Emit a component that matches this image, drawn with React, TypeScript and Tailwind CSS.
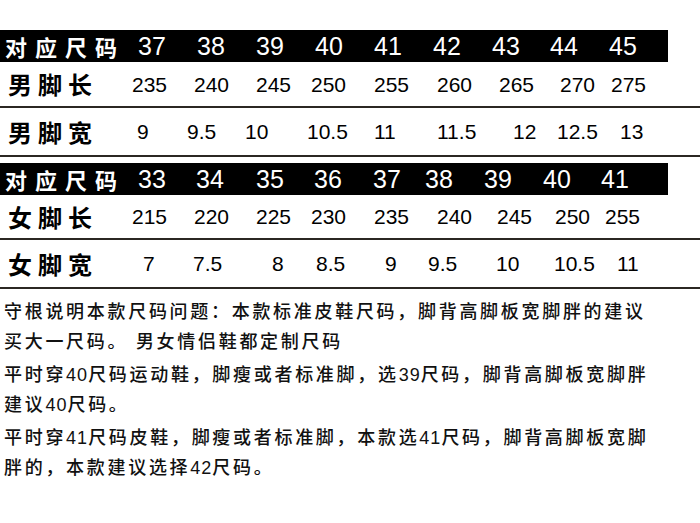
import React from "react";

type Cell = [string, string];

const cjk = "font-['Noto_Sans_CJK_SC',sans-serif]";
const num = "font-['Liberation_Sans',Arial,sans-serif]";
const para = "font-['Liberation_Sans','Noto_Sans_CJK_SC',sans-serif]";

function HeaderBar({ label, cells }: { label: string; cells: Cell[] }) {
  return (
    <div className="flex h-[32px] w-[668px] items-center bg-black text-white">
      <span className={`${cjk} w-[138px] shrink-0 pl-[5px] text-[22px] font-bold leading-none tracking-[8px]`}>
        {label}
      </span>
      {cells.map(([v, w], i) => (
        <span key={i} className={`${num} ${w} shrink-0 text-[25px] leading-none`}>
          {v}
        </span>
      ))}
    </div>
  );
}

function Row({ label, first, cells, h }: { label: string; first: string; cells: Cell[]; h: string }) {
  return (
    <div className={`flex ${h} items-center text-black`}>
      <span className={`${cjk} ${first} shrink-0 pl-[8px] text-[24px] font-bold leading-none tracking-[6px]`}>
        {label}
      </span>
      {cells.map(([v, w], i) => (
        <span key={i} className={`${num} ${w} shrink-0 text-[21px] leading-none`}>
          {v}
        </span>
      ))}
    </div>
  );
}

const Line = () => <div className="h-[2px] w-full bg-[#2b2723]" />;

// digits inside the notes sit tighter than the Chinese characters
const N = ({ children }: { children: string }) => <span className="tracking-[1px]">{children}</span>;

export default function App() {
  return (
    <div className="h-[523px] w-[700px] overflow-hidden bg-white pt-[30px]">
      <HeaderBar
        label="对应尺码"
        cells={[
          ["37", "w-[59px]"], ["38", "w-[59px]"], ["39", "w-[59px]"], ["40", "w-[59px]"],
          ["41", "w-[59px]"], ["42", "w-[59px]"], ["43", "w-[58px]"], ["44", "w-[59px]"], ["45", "w-[40px]"],
        ]}
      />
      <Row
        label="男脚长"
        first="w-[132px]"
        h="h-[44px]"
        cells={[
          ["235", "w-[62px]"], ["240", "w-[62px]"], ["245", "w-[55px]"], ["250", "w-[63px]"],
          ["255", "w-[63px]"], ["260", "w-[62px]"], ["265", "w-[61px]"], ["270", "w-[51px]"], ["275", "w-[45px]"],
        ]}
      />
      <Line />
      <Row
        label="男脚宽"
        first="w-[137px]"
        h="h-[47px]"
        cells={[
          ["9", "w-[50px]"], ["9.5", "w-[58px]"], ["10", "w-[62px]"], ["10.5", "w-[67px]"],
          ["11", "w-[63px]"], ["11.5", "w-[76px]"], ["12", "w-[44px]"], ["12.5", "w-[63px]"], ["13", "w-[40px]"],
        ]}
      />
      <Line />
      <div className="h-[6px]" />
      <HeaderBar
        label="对应尺码"
        cells={[
          ["33", "w-[58px]"], ["34", "w-[60px]"], ["35", "w-[58px]"], ["36", "w-[59px]"],
          ["37", "w-[52px]"], ["38", "w-[59px]"], ["39", "w-[59px]"], ["40", "w-[58px]"], ["41", "w-[40px]"],
        ]}
      />
      <Row
        label="女脚长"
        first="w-[132px]"
        h="h-[43px]"
        cells={[
          ["215", "w-[62px]"], ["220", "w-[62px]"], ["225", "w-[55px]"], ["230", "w-[63px]"],
          ["235", "w-[63px]"], ["240", "w-[60px]"], ["245", "w-[58px]"], ["250", "w-[50px]"], ["255", "w-[45px]"],
        ]}
      />
      <Line />
      <Row
        label="女脚宽"
        first="w-[143px]"
        h="h-[47px]"
        cells={[
          ["7", "w-[50px]"], ["7.5", "w-[79px]"], ["8", "w-[44px]"], ["8.5", "w-[69px]"],
          ["9", "w-[43px]"], ["9.5", "w-[68px]"], ["10", "w-[58px]"], ["10.5", "w-[63px]"], ["11", "w-[40px]"],
        ]}
      />
      <Line />

      <div className={`${para} mt-[8px] whitespace-nowrap pl-[4px] text-[18px] font-medium leading-[30px] tracking-[2.7px] text-[#111]`}>
        <p>
          守根说明本款尺码问题：本款标准皮鞋尺码，脚背高脚板宽脚胖的建议
          <br />
          买大一尺码。 男女情侣鞋都定制尺码
        </p>
        <p className="mt-[3px]">
          平时穿<N>40</N>尺码运动鞋，脚瘦或者标准脚，选<N>39</N>尺码，脚背高脚板宽脚胖
          <br />
          建议<N>40</N>尺码。
        </p>
        <p className="mt-[3px]">
          平时穿<N>41</N>尺码皮鞋，脚瘦或者标准脚，本款选<N>41</N>尺码，脚背高脚板宽脚
          <br />
          胖的，本款建议选择<N>42</N>尺码。
        </p>
      </div>
    </div>
  );
}
